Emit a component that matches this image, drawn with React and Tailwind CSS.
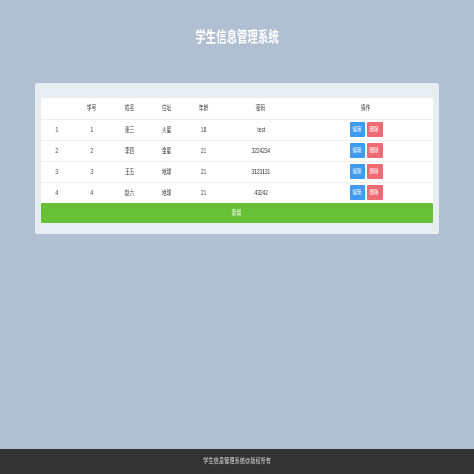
import React from 'react';

const students = [
    { id: 1, no: 1, name: '张三', addr: '火星', age: 18, pwd: 'test' },
    { id: 2, no: 2, name: '李四', addr: '金星', age: 21, pwd: '3224234' },
    { id: 3, no: 3, name: '王五', addr: '地球', age: 21, pwd: '3123131' },
    { id: 4, no: 4, name: '赵六', addr: '地球', age: 21, pwd: '43242' },
];

const cell = 'h-[21px] p-0 text-center align-middle font-normal';

// the picture is squeezed sideways, so all text is narrowed the same way
const T = ({ children }) => (
    <span className="inline-block scale-x-[0.72] whitespace-nowrap will-change-transform">{children}</span>
);

const App = () => {
    return (
        <div className="flex h-[474px] flex-col bg-[#b0bfd2] font-['Liberation_Sans','Noto_Sans_CJK_SC',sans-serif] text-[6.6px] text-[#333]">
            <h1 className="pt-[27px] text-center text-[14.5px] leading-[20px] font-bold text-white">
                <T>学生信息管理系统</T>
            </h1>

            <div className="mx-[35px] mt-[36px] rounded-[2px] bg-[#e8edf1] px-[6px] pt-[15px] pb-[11px]">
                <table className="w-full table-fixed border-collapse bg-white">
                    <colgroup>
                        <col className="w-[32px]" />
                        <col className="w-[38px]" />
                        <col className="w-[37px]" />
                        <col className="w-[37px]" />
                        <col className="w-[38px]" />
                        <col className="w-[76px]" />
                        <col />
                    </colgroup>
                    <thead>
                        <tr>
                            <th className={cell}></th>
                            <th className={cell}><T>学号</T></th>
                            <th className={cell}><T>姓名</T></th>
                            <th className={cell}><T>住址</T></th>
                            <th className={cell}><T>年龄</T></th>
                            <th className={cell}><T>密码</T></th>
                            <th className={cell}><T>操作</T></th>
                        </tr>
                    </thead>
                    <tbody>
                        {students.map((s) => (
                            <tr key={s.id} className="border-t border-[#eeeeee]">
                                <td className={cell}><T>{s.id}</T></td>
                                <td className={cell}><T>{s.no}</T></td>
                                <td className={cell}><T>{s.name}</T></td>
                                <td className={cell}><T>{s.addr}</T></td>
                                <td className={cell}><T>{s.age}</T></td>
                                <td className={cell}><T>{s.pwd}</T></td>
                                <td className={cell}>
                                    <div className="flex justify-center gap-[2px]">
                                        <button className="h-[15px] w-[15px] overflow-hidden rounded-[1px] bg-[#3e9bf0] text-[6px] text-white">
                                            <T>编辑</T>
                                        </button>
                                        <button className="h-[15px] w-[16px] overflow-hidden rounded-[1px] bg-[#ef6b73] text-[6px] text-white">
                                            <T>删除</T>
                                        </button>
                                    </div>
                                </td>
                            </tr>
                        ))}
                    </tbody>
                </table>
                <button className="block h-[20px] w-full rounded-[1px] bg-[#67c036] text-[6.6px] text-white">
                    <T>新增</T>
                </button>
            </div>

            <div className="mt-auto flex h-[25px] items-center justify-center bg-[#333333] text-[7.25px] text-[#dddddd]">
                <T>学生信息管理系统@版权所有</T>
            </div>
        </div>
    );
};

export default App;
